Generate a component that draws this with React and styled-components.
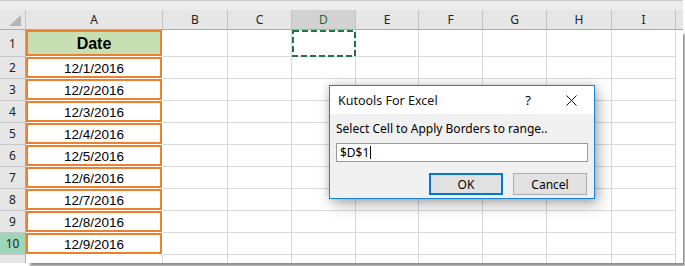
import React from "react";
import styled, { createGlobalStyle } from "styled-components";

const GlobalStyle = createGlobalStyle`
    html, body {
        margin: 0;
        padding: 0;
        background: #ffffff;
    }
    * {
        box-sizing: border-box;
    }
`;

const COLUMNS = ["A", "B", "C", "D", "E", "F", "G", "H", "I"];
const COL_WIDTHS = [137, 65, 64, 64, 63, 64, 64, 65, 64];
const DATES = [
    "12/1/2016",
    "12/2/2016",
    "12/3/2016",
    "12/4/2016",
    "12/5/2016",
    "12/6/2016",
    "12/7/2016",
    "12/8/2016",
    "12/9/2016",
];
const ORANGE = "#ee7f2d";
const GRID = "#d9d9d9";

const App = () => {
    const rows = [{ n: 1, value: "Date", head: true }].concat(
        DATES.map((d, i) => ({ n: i + 2, value: d }))
    );

    return (
        <>
            <GlobalStyle />
            <Frame>
                <Sheet>
                    <TopStrip />
                    <Corner>
                        <svg width="12" height="11" viewBox="0 0 12 11">
                            <polygon points="12,0 12,11 0,11" fill="#b5b5b5" />
                        </svg>
                    </Corner>
                    {COLUMNS.map((c) => (
                        <ColHead key={c} $active={c === "D"}>
                            {c}
                        </ColHead>
                    ))}
                    <Spare $head />

                    {rows.map((r) => (
                        <React.Fragment key={r.n}>
                            <RowHead $active={r.n === 10}>{r.n}</RowHead>
                            <DateCell $head={r.head}>{r.value}</DateCell>
                            {COLUMNS.slice(1).map((c) => (
                                <Cell key={c}>
                                    {c === "D" && r.n === 1 && (
                                        <Marquee width="64" height="27">
                                            <rect
                                                x="1"
                                                y="1"
                                                width="62"
                                                height="25"
                                                fill="none"
                                                stroke="#217346"
                                                strokeWidth="2"
                                                strokeDasharray="6 3"
                                            />
                                        </Marquee>
                                    )}
                                </Cell>
                            ))}
                            <Spare />
                        </React.Fragment>
                    ))}

                    <RowHead $cut />
                    {COLUMNS.map((c) => (
                        <Cell key={c} $cut />
                    ))}
                    <Spare />

                    <Dialog>
                        <TitleBar>
                            <Title>Kutools For Excel</Title>
                            <Help>?</Help>
                            <Close>
                                <svg width="11" height="11" viewBox="0 0 11 11">
                                    <path d="M0.5 0.5 L10.5 10.5 M10.5 0.5 L0.5 10.5" stroke="#111" strokeWidth="1" />
                                </svg>
                            </Close>
                        </TitleBar>
                        <DialogBody>
                            <Label>Select Cell to Apply Borders to range..</Label>
                            <RangeInput>
                                $D$1<Caret />
                            </RangeInput>
                            <Buttons>
                                <DialogButton $primary>OK</DialogButton>
                                <DialogButton>Cancel</DialogButton>
                            </Buttons>
                        </DialogBody>
                    </Dialog>
                </Sheet>
            </Frame>
        </>
    );
};

export default App;

const Frame = styled.div`
    position: relative;
    width: 685px;
    height: 266px;
    overflow: hidden;

    &::after {
        content: "";
        position: absolute;
        left: 30px;
        top: 34px;
        right: 0;
        bottom: 0;
        background: #8e8e8e;
        filter: blur(1px);
        z-index: 0;
    }
`;

const Sheet = styled.div`
    position: relative;
    z-index: 1;
    width: 683px;
    height: 263px;
    background: #ffffff;
    display: grid;
    grid-template-columns: 26px ${COL_WIDTHS.map((w) => `${w}px`).join(" ")} 1fr;
    grid-template-rows: 10px 20px 27px repeat(9, 22px) 1fr;
    font-family: "Liberation Sans", Arial, sans-serif;
    overflow: hidden;
`;

const TopStrip = styled.div`
    grid-column: 1 / -1;
    background: #ececec;
    border-top: 1px solid #c9c9c9;
`;

const Corner = styled.div`
    display: flex;
    align-items: flex-end;
    justify-content: flex-end;
    padding: 0 4px 3px 0;
    background: #e6e6e6;
    border-right: 1px solid #c3c3c3;
    border-bottom: 1px solid #ababab;
`;

const ColHead = styled.div`
    display: flex;
    align-items: center;
    justify-content: center;
    background: ${({ $active }) => ($active ? "#d2d2d2" : "#e6e6e6")};
    color: ${({ $active }) => ($active ? "#1e6b42" : "#222")};
    border-right: 1px solid #c3c3c3;
    border-bottom: 1px solid #ababab;
    font-family: "Noto Sans", sans-serif;
    font-size: 12px;
`;

const RowHead = styled.div`
    display: flex;
    align-items: center;
    justify-content: center;
    background: ${({ $active }) => ($active ? "#9fd5b7" : "#e6e6e6")};
    color: #222;
    border-right: 1px solid #ababab;
    border-bottom: ${({ $cut }) => ($cut ? "none" : "1px solid #c8c8c8")};
    font-family: "Noto Sans", sans-serif;
    font-size: 12px;
`;

const Cell = styled.div`
    position: relative;
    border-right: 1px solid ${GRID};
    border-bottom: ${({ $cut }) => ($cut ? "none" : `1px solid ${GRID}`)};
`;

const DateCell = styled.div`
    display: flex;
    align-items: center;
    justify-content: center;
    background: ${({ $head }) => ($head ? "#c6e0b4" : "#ffffff")};
    border-right: 1px solid #ffffff;
    border-bottom: 1px solid #ffffff;
    box-shadow: inset 0 0 0 2px ${ORANGE};
    font-size: ${({ $head }) => ($head ? "16px" : "13.5px")};
    font-weight: ${({ $head }) => ($head ? 700 : 400)};
    color: #000;
    padding-top: 1px;
`;

const Spare = styled.div`
    background: ${({ $head }) => ($head ? "#e6e6e6" : "#ffffff")};
    border-bottom: ${({ $head }) => ($head ? "1px solid #ababab" : "none")};
`;

const Marquee = styled.svg`
    position: absolute;
    left: 0;
    top: 0;
`;

const Dialog = styled.div`
    position: absolute;
    left: 329px;
    top: 85px;
    width: 266px;
    height: 114px;
    display: flex;
    flex-direction: column;
    background: #f0f0f0;
    border: 1px solid #1883d7;
    box-shadow: 0 0 8px rgba(0, 0, 0, 0.18), 4px 6px 14px rgba(0, 0, 0, 0.28);
    font-family: "Noto Sans", "Open Sans", sans-serif;
    font-size: 12px;
    color: #000;
`;

const TitleBar = styled.div`
    height: 28px;
    display: flex;
    align-items: center;
    background: #ffffff;
    padding-left: 8px;
`;

const Title = styled.span`
    flex: 1;
    font-size: 12.5px;
    color: #111;
`;

const Help = styled.span`
    width: 14px;
    text-align: center;
    font-size: 13px;
    margin-right: 31px;
`;

const Close = styled.span`
    display: flex;
    margin-right: 17px;
`;

const DialogBody = styled.div`
    display: flex;
    flex-direction: column;
    padding: 7px 6px 0 6px;
`;

const Label = styled.div`
    height: 16px;
    line-height: 16px;
`;

const RangeInput = styled.div`
    margin-top: 6px;
    height: 19px;
    width: 252px;
    display: flex;
    align-items: center;
    padding-left: 3px;
    background: #ffffff;
    border: 1px solid #9a9a9a;
`;

const Caret = styled.span`
    display: inline-block;
    width: 1px;
    height: 13px;
    margin-left: 1px;
    background: #000;
`;

const Buttons = styled.div`
    margin-top: 11px;
    display: flex;
    justify-content: flex-end;
    gap: 10px;
    padding-right: 1px;
`;

const DialogButton = styled.div`
    width: 74px;
    height: 22px;
    display: flex;
    align-items: center;
    justify-content: center;
    background: #e1e1e1;
    border: ${({ $primary }) => ($primary ? "2px solid #0078d7" : "1px solid #adadad")};
`;
